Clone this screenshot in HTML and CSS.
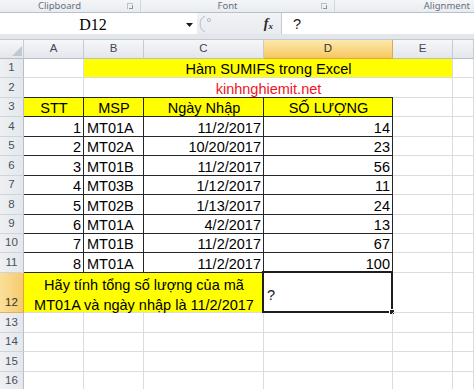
FILE: index.html
```html
<!DOCTYPE html>
<html lang="vi">
<head>
<meta charset="utf-8">
<title>Hàm SUMIFS trong Excel</title>
<link rel="stylesheet" href="styles.css">
</head>
<body>
<div class="app">
  <div class="ribbon">
    <div class="group g-clip"><span class="glabel">Clipboard</span><i class="launcher"></i></div>
    <div class="group g-font"><span class="glabel">Font</span><i class="launcher"></i></div>
    <div class="group g-align"><span class="glabel">Alignment</span></div>
  </div>
  <div class="fbar">
    <div class="namebox">
      <span class="nb-text">D12</span>
      <svg class="nb-arrow" width="7" height="4" viewBox="0 0 7 4"><path d="M0 0H7L3.5 4Z" fill="#1a1a1a"/></svg>
    </div>
    <div class="fbtns">
      <svg class="grip" width="14" height="18" viewBox="0 0 14 18"><path d="M6 1A9 9 0 0 0 6 17" fill="none" stroke="#b4bbc4" stroke-width="1"/><circle cx="10" cy="5" r="1.6" fill="none" stroke="#b4bbc4" stroke-width="1"/></svg>
      <span class="fx"><i>f</i><sub>x</sub></span>
    </div>
    <div class="finput">?</div>
  </div>
  <div class="fgap"></div>
  <div class="sheet">
    <div class="corner"><svg width="10" height="10" viewBox="0 0 10 10"><path d="M10 0V10H0Z" fill="#c3c8cf"/></svg></div>
    <div class="ch">A</div><div class="ch">B</div><div class="ch">C</div><div class="ch sel">D</div><div class="ch">E</div><div class="ch"></div>

    <div class="rh">1</div><div class="c"></div><div class="c yl span4 ctr">Hàm SUMIFS trong Excel</div><div class="c"></div>
    <div class="rh">2</div><div class="c"></div><div class="c red span4 ctr">kinhnghiemit.net</div><div class="c"></div>
    <div class="rh">3</div><div class="c yl bd top ctr">STT</div><div class="c yl bd top ctr">MSP</div><div class="c yl bd top ctr">Ngày Nhập</div><div class="c yl bd top ctr">SỐ LƯỢNG</div><div class="c"></div><div class="c"></div>
    <div class="rh">4</div><div class="c bd num">1</div><div class="c bd">MT01A</div><div class="c bd num">11/2/2017</div><div class="c bd num">14</div><div class="c"></div><div class="c"></div>
    <div class="rh">5</div><div class="c bd num">2</div><div class="c bd">MT02A</div><div class="c bd num">10/20/2017</div><div class="c bd num">23</div><div class="c"></div><div class="c"></div>
    <div class="rh">6</div><div class="c bd num">3</div><div class="c bd">MT01B</div><div class="c bd num">11/2/2017</div><div class="c bd num">56</div><div class="c"></div><div class="c"></div>
    <div class="rh">7</div><div class="c bd num">4</div><div class="c bd">MT03B</div><div class="c bd num">1/12/2017</div><div class="c bd num">11</div><div class="c"></div><div class="c"></div>
    <div class="rh">8</div><div class="c bd num">5</div><div class="c bd">MT02B</div><div class="c bd num">1/13/2017</div><div class="c bd num">24</div><div class="c"></div><div class="c"></div>
    <div class="rh">9</div><div class="c bd num">6</div><div class="c bd">MT01A</div><div class="c bd num">4/2/2017</div><div class="c bd num">13</div><div class="c"></div><div class="c"></div>
    <div class="rh">10</div><div class="c bd num">7</div><div class="c bd">MT01B</div><div class="c bd num">11/2/2017</div><div class="c bd num">67</div><div class="c"></div><div class="c"></div>
    <div class="rh">11</div><div class="c bd num">8</div><div class="c bd">MT01A</div><div class="c bd num">11/2/2017</div><div class="c bd num">100</div><div class="c"></div><div class="c"></div>
    <div class="rh sel">12</div><div class="c yl span3 wrap"><span class="wraptext">Hãy tính tổng số lượng của mã MT01A và ngày nhập là 11/2/2017</span></div><div class="c active">?<span class="selbox"><i class="handle"></i></span></div><div class="c"></div><div class="c"></div>
    <div class="rh">13</div><div class="c"></div><div class="c"></div><div class="c"></div><div class="c"></div><div class="c"></div><div class="c"></div>
    <div class="rh">14</div><div class="c"></div><div class="c"></div><div class="c"></div><div class="c"></div><div class="c"></div><div class="c"></div>
    <div class="rh">15</div><div class="c"></div><div class="c"></div><div class="c"></div><div class="c"></div><div class="c"></div><div class="c"></div>
    <div class="rh">16</div><div class="c"></div><div class="c"></div><div class="c"></div><div class="c"></div><div class="c"></div><div class="c"></div>
  </div>
</div>
</body>
</html>
```
FILE: styles.css
```css
* { box-sizing: border-box; margin: 0; padding: 0; }
html, body { width: 474px; height: 389px; overflow: hidden; background: #fff; }
body { font-family: "Liberation Sans", Arial, sans-serif; color: #000; }

.app { width: 474px; height: 389px; overflow: hidden; }

/* ribbon bottom strip */
.ribbon {
  height: 13px;
  display: flex;
  background: linear-gradient(#f3f5f8, #e8ecf0);
  border-bottom: 1px solid #b9c0c9;
}
.group {
  display: flex;
  align-items: flex-end;
  justify-content: center;
  position: relative;
  border-right: 1px solid #d2d7de;
}
.glabel {
  font-family: "Noto Sans", "Open Sans", sans-serif;
  font-size: 9.5px;
  line-height: 11px;
  color: #66707c;
  padding-bottom: 1px;
}
.g-clip { width: 141px; padding-right: 21px; }
.g-font { width: 194px; padding-right: 20px; }
.g-align { flex: 1; justify-content: flex-end; padding-right: 4px; border-right: 0; }
.launcher {
  position: absolute;
  right: 7px;
  top: 3px;
  width: 6px;
  height: 6px;
  border-left: 1px solid #b8bfc8;
  border-top: 1px solid #b8bfc8;
}
.launcher::after {
  content: "";
  position: absolute;
  right: 0;
  bottom: 0;
  width: 3px;
  height: 3px;
  border-right: 1px solid #8a939e;
  border-bottom: 1px solid #8a939e;
}

/* formula bar */
.fbar {
  height: 21px;
  display: flex;
  background: #fff;
}
.namebox {
  width: 197px;
  display: flex;
  align-items: center;
  background: #fff;
}
.nb-text {
  flex: 1;
  text-align: center;
  font-family: "Liberation Serif", "Times New Roman", serif;
  font-size: 16px;
  line-height: 16px;
  padding-top: 2px;
}
.nb-arrow { margin: 2px 4px 0 0; }
.fbtns {
  width: 85px;
  display: flex;
  align-items: center;
  justify-content: space-between;
  background: linear-gradient(#f1f3f6, #e8ebef);
  border-right: 1px solid #c3c9d1;
  padding: 0 8px 0 2px;
}
.grip { margin-top: 1px; }
.fx {
  font-family: "Liberation Serif", "Times New Roman", serif;
  font-weight: bold;
  color: #2a2a2a;
  font-size: 14px;
  line-height: 14px;
  padding-top: 2px;
}
.fx i { font-style: italic; }
.fx sub { font-size: 9px; font-style: italic; vertical-align: -1px; }
.finput {
  flex: 1;
  font-size: 14.5px;
  line-height: 16px;
  padding: 3px 0 0 11px;
  color: #1a1a1a;
}
.fgap {
  height: 5px;
  background: #e3e6ea;
}

/* sheet grid */
.sheet {
  display: grid;
  grid-template-columns: 24px 60px 60px 120px 129px 60px 1fr;
  grid-template-rows: 20px repeat(11, 19.45px) 40.6px repeat(4, 19.4px);
}
.corner, .ch {
  border-top: 1px solid #c3c9d1;
  border-right: 1px solid #c6ccd3;
  border-bottom: 1px solid #b7bec8;
  background: linear-gradient(#f6f7f9, #e3e6eb);
}
.corner {
  display: flex;
  align-items: flex-end;
  justify-content: flex-end;
  padding: 0 1px 2px 0;
}
.ch {
  display: flex;
  align-items: flex-end;
  justify-content: center;
  font-size: 11.5px;
  line-height: 13px;
  padding-bottom: 3px;
  color: #3f4753;
}
.ch.sel {
  background: linear-gradient(#fde9ae, #f5c860);
  border-right-color: #d9ac5a;
  border-bottom-color: #e2a545;
  color: #333;
}
.rh {
  display: flex;
  align-items: flex-end;
  justify-content: center;
  font-size: 11.5px;
  line-height: 13px;
  padding-bottom: 3px;
  color: #48505c;
  background: linear-gradient(90deg, #eef0f3, #e4e8ec);
  border-right: 1px solid #b7bec8;
  border-bottom: 1px solid #cfd4da;
}
.rh.sel {
  background: linear-gradient(90deg, #fbdf9a, #f5cb6c);
  border-right-color: #e2a545;
  border-bottom-color: #e0b060;
  color: #333;
}

.c {
  position: relative;
  display: flex;
  align-items: flex-end;
  font-size: 14.5px;
  line-height: 16px;
  padding: 0 2px 0 3px;
  white-space: nowrap;
  border-right: 1px solid #dadcdd;
  border-bottom: 1px solid #dadcdd;
}
.span4 { grid-column: span 4; }
.span3 { grid-column: span 3; }
.ctr { justify-content: center; }
.num { justify-content: flex-end; }
.yl { background: #ffff00; }
.red { color: #f0141e; }
.bd { border-right-color: #262626; border-bottom-color: #262626; }
.top { box-shadow: 0 -1px 0 #262626; }

.wrap {
  justify-content: center;
  white-space: normal;
  text-align: center;
}
.wraptext {
  line-height: 19.5px;
  margin-bottom: -3px;
}

.active {
  align-items: center;
  padding-top: 4px;
  color: #1a1a1a;
}
.selbox {
  position: absolute;
  left: -2px;
  top: -2px;
  right: -1px;
  bottom: -1px;
  border: 2px solid #1e1e1e;
}
.handle {
  position: absolute;
  right: -4px;
  bottom: -4px;
  width: 6px;
  height: 6px;
  background: #1e1e1e;
  border: 1px solid #fff;
}
```
